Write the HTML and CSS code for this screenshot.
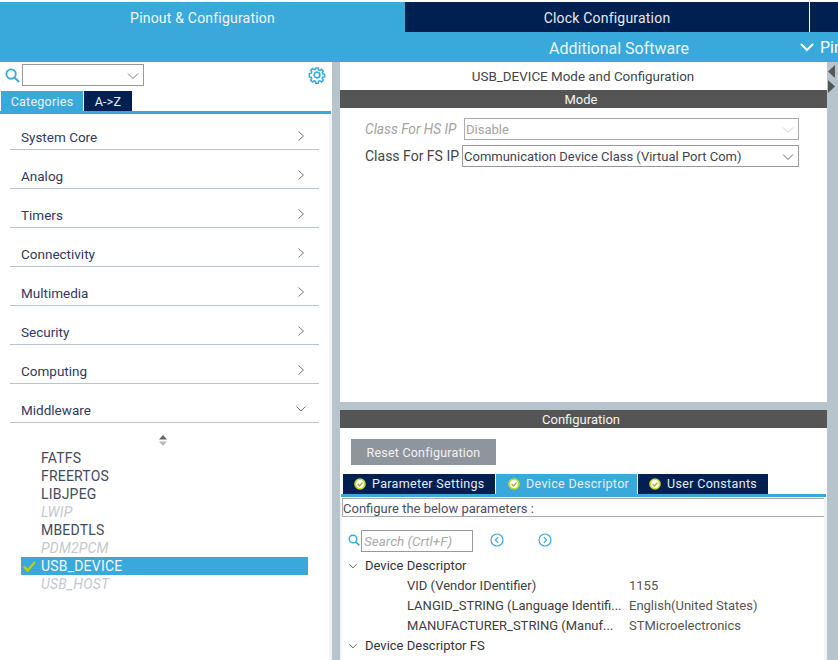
FILE: index.html
```html
<!DOCTYPE html>
<html lang="en">
<head>
<meta charset="utf-8">
<title>USB_DEVICE Mode and Configuration</title>
<link rel="stylesheet" href="styles.css">
</head>
<body>
<div class="app">
  <header class="header">
    <div class="tabs-row">
      <div class="main-tab active">Pinout &amp; Configuration</div>
      <div class="main-tab clock">Clock Configuration</div>
      <div class="main-tab rest"></div>
    </div>
    <div class="sub-row">
      <div class="sub-title">Additional Software</div>
      <div class="pin-link">
        <svg class="pin-chev" viewBox="0 0 14 10"><path d="M1 2l6 6 6-6" fill="none" stroke="#fff" stroke-width="2"/></svg>
        <span>Pinout View</span>
      </div>
    </div>
  </header>
  <main class="body">
    <aside class="left">
      <div class="search-row">
        <svg class="search-ico" viewBox="0 0 16 16"><circle cx="6.5" cy="6.5" r="5" fill="none" stroke="#39a9dc" stroke-width="2"/><path d="M10 10l5 5" stroke="#39a9dc" stroke-width="2.2"/></svg>
        <div class="search-combo">
          <svg class="combo-chev" viewBox="0 0 12 8"><path d="M1 1.5l5 5 5-5" fill="none" stroke="#777" stroke-width="1"/></svg>
        </div>
        <svg class="gear" viewBox="0 0 18 18"><g fill="none" stroke="#39a9dc" stroke-width="1.7"><circle cx="9" cy="9" r="2.8"/><path d="M7.6 1.2h2.8l.4 2.1 1.4.6 1.8-1.2 2 2-1.2 1.8.6 1.4 2.1.4v2.8l-2.1.4-.6 1.4 1.2 1.8-2 2-1.8-1.2-1.4.6-.4 2.1H7.6l-.4-2.1-1.4-.6-1.8 1.2-2-2 1.2-1.8-.6-1.4-2.1-.4V7.4l2.1-.4.6-1.4-1.2-1.8 2-2 1.8 1.2 1.4-.6z" transform="translate(.9 .9) scale(.9)"/></g></svg>
      </div>
      <div class="cat-tabs">
        <div class="cat-tab on">Categories</div>
        <div class="cat-tab off">A-&gt;Z</div>
      </div>
      <div class="left-scroll">
        <div class="cat-list">
          <div class="cat"><span>System Core</span><svg class="cat-chev" viewBox="0 0 6 10"><path d="M.5.5L5.5 5 .5 9.5" fill="none" stroke="#777" stroke-width="1"/></svg></div>
          <div class="cat"><span>Analog</span><svg class="cat-chev" viewBox="0 0 6 10"><path d="M.5.5L5.5 5 .5 9.5" fill="none" stroke="#777" stroke-width="1"/></svg></div>
          <div class="cat"><span>Timers</span><svg class="cat-chev" viewBox="0 0 6 10"><path d="M.5.5L5.5 5 .5 9.5" fill="none" stroke="#777" stroke-width="1"/></svg></div>
          <div class="cat"><span>Connectivity</span><svg class="cat-chev" viewBox="0 0 6 10"><path d="M.5.5L5.5 5 .5 9.5" fill="none" stroke="#777" stroke-width="1"/></svg></div>
          <div class="cat"><span>Multimedia</span><svg class="cat-chev" viewBox="0 0 6 10"><path d="M.5.5L5.5 5 .5 9.5" fill="none" stroke="#777" stroke-width="1"/></svg></div>
          <div class="cat"><span>Security</span><svg class="cat-chev" viewBox="0 0 6 10"><path d="M.5.5L5.5 5 .5 9.5" fill="none" stroke="#777" stroke-width="1"/></svg></div>
          <div class="cat"><span>Computing</span><svg class="cat-chev" viewBox="0 0 6 10"><path d="M.5.5L5.5 5 .5 9.5" fill="none" stroke="#777" stroke-width="1"/></svg></div>
          <div class="cat"><span>Middleware</span><svg class="cat-chev down" viewBox="0 0 10 6"><path d="M.5.5L5 5 9.5.5" fill="none" stroke="#777" stroke-width="1"/></svg></div>
        </div>
        <div class="sorter"><svg class="sort-ico" viewBox="0 0 8 11"><path d="M4 0l4 4.5H0z" fill="#666"/><path d="M4 11l4-4.5H0z" fill="#bbb"/></svg></div>
        <ul class="mw-list">
          <li class="mw">FATFS</li>
          <li class="mw">FREERTOS</li>
          <li class="mw">LIBJPEG</li>
          <li class="mw dis">LWIP</li>
          <li class="mw">MBEDTLS</li>
          <li class="mw dis">PDM2PCM</li>
          <li class="mw sel"><svg class="mw-check" viewBox="0 0 13 11"><path d="M1 5.5l3.6 4L12 1" fill="none" stroke="#b5cf1e" stroke-width="2.4"/></svg>USB_DEVICE</li>
          <li class="mw dis">USB_HOST</li>
        </ul>
      </div>
    </aside>
    <div class="split-v"></div>
    <section class="right">
      <div class="mode-panel">
        <div class="panel-title">USB_DEVICE Mode and Configuration</div>
        <div class="bar">Mode</div>
        <div class="form">
          <div class="form-row hs">
            <label class="flabel dim">Class For HS IP</label>
            <div class="select disabled">Disable<svg class="sel-chev" viewBox="0 0 12 8"><path d="M1 1.5l5 5 5-5" fill="none" stroke="#ccc"/></svg></div>
          </div>
          <div class="form-row fs">
            <label class="flabel">Class For FS IP</label>
            <div class="select">Communication Device Class (Virtual Port Com)<svg class="sel-chev" viewBox="0 0 12 8"><path d="M1 1.5l5 5 5-5" fill="none" stroke="#666"/></svg></div>
          </div>
        </div>
      </div>
      <div class="split-h"></div>
      <div class="config-panel">
        <div class="bar">Configuration</div>
        <button class="reset">Reset Configuration</button>
        <div class="cfg-tabs">
          <div class="cfg-tab"><svg class="ok" viewBox="0 0 12 12"><circle cx="6" cy="6" r="5.8" fill="#c6d92e"/><circle cx="6" cy="6" r="3.9" fill="#fff"/><path d="M3.6 6l1.9 2 3-3.4" fill="none" stroke="#a3b520" stroke-width="1.4"/></svg>Parameter Settings</div>
          <div class="cfg-tab on"><svg class="ok" viewBox="0 0 12 12"><circle cx="6" cy="6" r="5.8" fill="#c6d92e"/><circle cx="6" cy="6" r="3.9" fill="#fff"/><path d="M3.6 6l1.9 2 3-3.4" fill="none" stroke="#a3b520" stroke-width="1.4"/></svg>Device Descriptor</div>
          <div class="cfg-tab"><svg class="ok" viewBox="0 0 12 12"><circle cx="6" cy="6" r="5.8" fill="#c6d92e"/><circle cx="6" cy="6" r="3.9" fill="#fff"/><path d="M3.6 6l1.9 2 3-3.4" fill="none" stroke="#a3b520" stroke-width="1.4"/></svg>User Constants</div>
        </div>
        <div class="cfg-body">
          <div class="hint">Configure the below parameters :</div>
          <div class="tool-row">
            <svg class="tool-search" viewBox="0 0 12 12"><circle cx="5" cy="5" r="3.8" fill="none" stroke="#39a9dc" stroke-width="1.4"/><path d="M8 8l3.4 3.4" stroke="#39a9dc" stroke-width="1.6"/></svg>
            <div class="tool-input">Search (Crtl+F)</div>
            <svg class="nav prev" viewBox="0 0 14 14"><circle cx="7" cy="7" r="6" fill="none" stroke="#39a9dc" stroke-width="1.2"/><path d="M8.2 4.2L5.4 7l2.8 2.8" fill="none" stroke="#39a9dc" stroke-width="1.2"/></svg>
            <svg class="nav" viewBox="0 0 14 14"><circle cx="7" cy="7" r="6" fill="none" stroke="#39a9dc" stroke-width="1.2"/><path d="M5.8 4.2L8.6 7l-2.8 2.8" fill="none" stroke="#39a9dc" stroke-width="1.2"/></svg>
          </div>
          <div class="tree-head"><svg class="tree-chev" viewBox="0 0 10 6"><path d="M1 .8L5 5 9 .8" fill="none" stroke="#777"/></svg>Device Descriptor</div>
          <div class="tree-row"><span class="tk">VID (Vendor IDentifier)</span><span class="tv">1155</span></div>
          <div class="tree-row"><span class="tk">LANGID_STRING (Language Identifi...</span><span class="tv">English(United States)</span></div>
          <div class="tree-row"><span class="tk">MANUFACTURER_STRING (Manuf...</span><span class="tv">STMicroelectronics</span></div>
          <div class="tree-head"><svg class="tree-chev" viewBox="0 0 10 6"><path d="M1 .8L5 5 9 .8" fill="none" stroke="#777"/></svg>Device Descriptor FS</div>
        </div>
      </div>
    </section>
    <div class="side-strip">
      <svg class="strip-arrows" viewBox="0 0 8 30"><path d="M8 2v13L1 8.5z" fill="#555"/><path d="M1 17v13l7-6.5z" fill="#555"/></svg>
    </div>
  </main>
</div>
</body>
</html>
```
FILE: styles.css
```css
* { box-sizing: border-box; }
html, body { margin: 0; padding: 0; }
body {
  width: 838px;
  height: 660px;
  overflow: hidden;
  background: #fff;
  font-family: Roboto, "Liberation Sans", sans-serif;
  font-size: 14px;
  color: #3c4560;
}
.app { width: 838px; height: 660px; display: flex; flex-direction: column; overflow: hidden; }

/* header */
.header { height: 62px; padding-top: 2px; background: linear-gradient(#fff 2px, #39a9dc 2px); flex: none; }
.tabs-row { display: flex; height: 30px; }
.main-tab { height: 30px; line-height: 32px; text-align: center; color: #f0f6fa; font-size: 14px; letter-spacing: .2px; }
.main-tab.active { width: 405px; background: #39a9dc; }
.main-tab.clock { width: 404px; background: #002052; color: #e6eaf0; }
.main-tab.rest { width: 29px; background: #002052; border-left: 1px solid #fff; }
.sub-row { height: 30px; position: relative; }
.sub-title { margin-left: 405px; width: 428px; height: 30px; line-height: 33px; text-align: center; color: #eaf5fb; font-size: 16px; }
.pin-link { position: absolute; left: 800px; top: 0; width: 38px; height: 30px; overflow: hidden; white-space: nowrap; color: #fff; font-size: 16px; line-height: 31px; display: flex; align-items: center; gap: 6px; }
.pin-chev { width: 14px; height: 10px; flex: none; }

/* body */
.body { flex: 1; display: flex; min-height: 0; }
.left { width: 332px; flex: none; background: #fff; display: flex; flex-direction: column; }
.split-v { width: 8px; flex: none; background: #b8c4cb; }
.search-row { height: 29px; flex: none; display: flex; align-items: flex-start; padding: 2px 0 0 5px; position: relative; }
.search-ico { width: 15px; height: 15px; margin-top: 4px; }
.search-combo { width: 122px; height: 22px; margin-left: 2px; border: 1px solid #999; position: relative; }
.combo-chev { position: absolute; right: 4px; top: 7px; width: 12px; height: 8px; }
.gear { position: absolute; left: 308px; top: 4px; width: 18px; height: 18px; }
.cat-tabs { display: flex; height: 23px; flex: none; padding-left: 1px; border-bottom: 3px solid #39a9dc; width: 331px; }
.cat-tab { height: 20px; line-height: 21px; text-align: center; color: #e8f3f9; font-size: 12.5px; letter-spacing: .25px; }
.cat-tab.on { width: 82px; background: #39a9dc; }
.cat-tab.off { width: 48px; margin-left: 1px; background: #002052; }
.left-scroll { flex: 1; min-height: 0; border-right: 3px solid #f2f3f4; }
.cat-list { padding: 0 10px; }
.cat { height: 39px; border-bottom: 1px solid #b8c4cb; display: flex; align-items: flex-end; padding: 0 14px 3px 11px; color: #33395f; font-size: 13.5px; line-height: 17px; position: relative; }
.cat:first-child { height: 36px; }
.cat-chev { position: absolute; right: 15px; bottom: 8px; width: 6px; height: 10px; }
.cat-chev.down { width: 10px; height: 6px; right: 13px; bottom: 10px; }
.sorter { height: 26px; position: relative; }
.sort-ico { position: absolute; left: 159px; top: 12px; width: 8px; height: 11px; }
.mw-list { list-style: none; margin: 0; padding: 0 0 0 21px; width: 308px; }
.mw { height: 18px; line-height: 18px; padding-left: 20px; color: #444a5a; font-size: 14px; letter-spacing: .2px; position: relative; }
.mw.dis { color: #c4c8cc; font-style: italic; }
.mw.sel { background: #39a9dc; color: #f2f9fc; }
.mw-check { position: absolute; left: 2px; top: 4px; width: 13px; height: 11px; }

/* right */
.right { width: 487px; flex: none; display: flex; flex-direction: column; }
.side-strip { flex: 1; background: #b8c4cb; position: relative; }
.strip-arrows { position: absolute; left: 0; top: 1px; width: 8px; height: 30px; }
.mode-panel { height: 340px; flex: none; background: #fff; }
.panel-title { height: 28px; line-height: 29px; text-align: center; color: #444; font-size: 13.4px; padding-right: 1px; }
.bar { height: 18px; line-height: 20px; background: #545554; color: #f4f4f4; font-size: 13px; text-align: center; padding-right: 5px; }
.form { padding-top: 10px; }
.form-row { display: flex; height: 22px; align-items: center; margin-bottom: 5px; }
.flabel { font-size: 14px; color: #444; margin-left: 25px; white-space: nowrap; flex: none; }
.hs .flabel { width: 99px; font-size: 13.7px; }
.fs .flabel { width: 97px; }
.flabel.dim { color: #a3a3a3; font-style: italic; }
.select { height: 22px; border: 1px solid #999; position: relative; line-height: 21px; padding-left: 1px; font-size: 13px; color: #3f4450; flex: none; white-space: nowrap; }
.hs .select { width: 335px; color: #a3a3a3; border-color: #aaa; }
.fs .select { width: 337px; }
.sel-chev { position: absolute; right: 4px; top: 7px; width: 12px; height: 8px; }
.split-h { height: 8px; flex: none; background: #b8c4cb; }
.config-panel { flex: 1; min-height: 0; background: #fff; overflow: hidden; }
.reset { display: block; margin: 11px 0 0 11px; width: 145px; height: 26px; border: 0; padding: 0; background: #8e959c; color: #f2f2f2; font: 12.5px Roboto, "Liberation Sans", sans-serif; letter-spacing: .2px; }
.cfg-tabs { display: flex; margin: 9px 0 0 1px; padding-left: 2px; height: 23px; border-bottom: 3px solid #39a9dc; width: 485px; }
.cfg-tab { height: 20px; line-height: 20px; background: #002052; color: #e8edf2; font-size: 12.5px; letter-spacing: .33px; display: flex; align-items: center; padding-left: 11px; margin-right: 1px; white-space: nowrap; }
.cfg-tab:nth-child(1) { width: 152px; }
.cfg-tab:nth-child(2) { width: 141px; background: #39a9dc; padding-left: 12px; }
.cfg-tab:nth-child(3) { width: 130px; }
.ok { width: 12px; height: 12px; margin-right: 6px; flex: none; }
.cfg-body { border-left: 2px solid #f2f3f4; border-right: 3px solid #f2f3f4; padding-top: 1px; height: 163px; }
.hint { height: 19px; line-height: 19px; border-top: 1px solid #aaa; border-bottom: 1px solid #aaa; border-left: 1px solid #aaa; color: #4a4f60; font-size: 13px; }
.tool-row { height: 35px; display: flex; align-items: flex-start; padding: 13px 0 0 6px; }
.tool-search { width: 12px; height: 12px; margin-top: 4px; }
.tool-input { width: 112px; height: 22px; margin-left: 1px; border: 1px solid #999; line-height: 20px; padding-left: 2px; font-style: italic; color: #aaa; font-size: 13.5px; }
.nav { width: 14px; height: 14px; margin-left: 34px; margin-top: 3px; flex: none; }
.nav.prev { margin-left: 17px; }
.tree-head { height: 20px; line-height: 20px; display: flex; align-items: center; color: #333; font-size: 13px; padding-left: 6px; }
.tool-row + .tree-head { margin-top: 4px; }
.tree-chev { width: 10px; height: 6px; margin-right: 7px; flex: none; }
.tree-row { height: 20px; line-height: 20px; display: flex; font-size: 13px; padding-left: 65px; white-space: nowrap; }
.tk { width: 222px; color: #3d3d3d; flex: none; }
.tv { color: #555; }
```
